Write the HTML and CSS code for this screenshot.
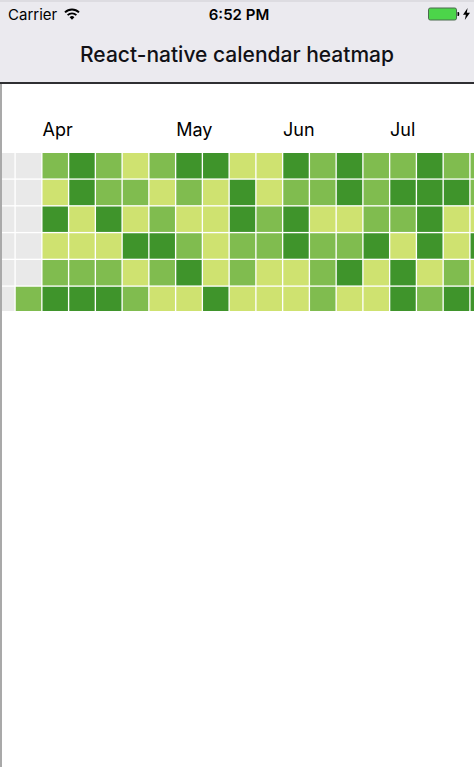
FILE: index.html
```html
<!DOCTYPE html>
<html lang="en">
<head>
    <meta charset="UTF-8">
    <meta name="viewport" content="width=device-width, initial-scale=1.0">
    <title>React-native calendar heatmap</title>
    <link rel="stylesheet" href="styles.css">
</head>
<body>
    <header class="header">
        <div class="status-bar">
            <div class="carrier">
                <span>Carrier</span>
                <svg class="wifi" width="16" height="12" viewBox="0 0 16 12" aria-hidden="true">
                    <path d="M1 4.4a10 10 0 0 1 14 0" fill="none" stroke="#000" stroke-width="2"/>
                    <path d="M3.6 7.2a6.3 6.3 0 0 1 8.8 0" fill="none" stroke="#000" stroke-width="1.8"/>
                    <path d="M5.6 9.2a3.5 3.5 0 0 1 4.8 0L8 11.7z" fill="#000"/>
                </svg>
            </div>
            <span class="time">6:52 PM</span>
            <div class="power">
                <svg width="42" height="14" viewBox="0 0 42 14" aria-hidden="true">
                    <rect x="0.5" y="1" width="28" height="12" rx="1.8" fill="#4cd54a" stroke="#4b6a4e"/>
                    <path d="M29.5 5h.7a1 1 0 0 1 1 1v2a1 1 0 0 1-1 1h-.7z" fill="#000"/>
                    <path d="M39.6 1L35 7.8h2.9L36.8 13l5.2-7.2h-3.2z" fill="#000"/>
                </svg>
            </div>
        </div>
        <h1>React-native calendar heatmap</h1>
    </header>
    <main class="content">
        <div class="heatmap">
            <div class="months">
                <span class="month apr">Apr</span>
                <span class="month may">May</span>
                <span class="month jun">Jun</span>
                <span class="month jul">Jul</span>
            </div>
            <svg class="days" id="days" viewBox="0 0 379 118" aria-hidden="true"></svg>
        </div>
    </main>

    <script>
        // One string per weekday, one digit per week (0 = no data, 3 = busiest)
        const levels = [
            "0023212331132322322",
            "0013221213122323332",
            "0031312113231122311",
            "0011133212232231313",
            "0022212312112313121",
            "0233321131112113233"
        ];

        const squareSize = 19;
        const gutter = 1;
        const days = document.getElementById('days');

        levels.forEach((row, y) => {
            row.split('').forEach((level, x) => {
                const day = document.createElementNS('http://www.w3.org/2000/svg', 'rect');
                day.setAttribute('class', 'level-' + level);
                day.setAttribute('x', x * (squareSize + gutter));
                day.setAttribute('y', y * (squareSize + gutter));
                day.setAttribute('width', squareSize);
                day.setAttribute('height', squareSize);
                days.appendChild(day);
            });
        });
    </script>
</body>
</html>
```

FILE: styles.css
```css
* {
    box-sizing: border-box;
}
body {
    font-family: Inter, "Liberation Sans", sans-serif;
    background-color: #fff;
    color: #000;
    margin: 0;
    min-height: 100vh;
    display: flex;
    flex-direction: column;
}
.header {
    background-color: #ebeaef;
    border-top: 2px solid #dddce1;
    border-bottom: 2px solid #2f2f32;
    height: 84px;
}
.status-bar {
    display: grid;
    grid-template-columns: 1fr auto 1fr;
    align-items: center;
    height: 24px;
    padding: 0 4px 0 8px;
    font-size: 15px;
}
.carrier {
    display: flex;
    align-items: center;
    gap: 7px;
}
.time {
    font-weight: 600;
}
.power {
    display: flex;
    justify-content: flex-end;
}
h1 {
    margin: 16px 0 0;
    font-size: 21px;
    font-weight: 500;
    line-height: 26px;
    text-align: center;
    color: #111116;
}
.content {
    flex: 1;
    border-left: 2px solid #a9a9a9;
    overflow: hidden;
}
.heatmap {
    margin: 35px -22px 0 -13px;
}
.months {
    display: grid;
    grid-template-columns: repeat(19, minmax(0, 1fr));
    gap: 1px;
    margin-bottom: 12px;
}
.month {
    font-size: 18px;
    line-height: 22px;
    white-space: nowrap;
}
.apr {
    grid-column: 3;
}
.may {
    grid-column: 8;
}
.jun {
    grid-column: 12;
}
.jul {
    grid-column: 16;
}
.days {
    display: block;
    width: 100%;
}
.level-0 {
    fill: #e9e9e9;
}
.level-1 {
    fill: #cfe270;
}
.level-2 {
    fill: #80bc4f;
}
.level-3 {
    fill: #3f942b;
}
```
